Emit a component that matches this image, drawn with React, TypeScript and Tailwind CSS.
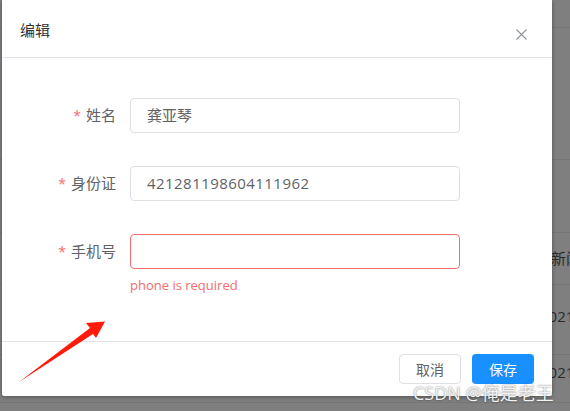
import React from "react";

const FONT = "font-['Open_Sans','Noto_Sans_CJK_SC',sans-serif]";

function Label({ text }: { text: string }) {
  return (
    <div className="w-[128px] pr-[14px] flex justify-end items-center text-[15px] text-[#606266]">
      <span className="text-[#f56c6c] mr-[5px] text-[14px] -mt-[1px]">*</span>
      <span>{text}</span>
    </div>
  );
}

export default function App() {
  return (
    <div className={`relative w-[570px] h-[411px] overflow-hidden bg-[#7f7f7f] ${FONT}`}>
      {/* background page (table under overlay) */}
      <div className="flex flex-col text-[15px] text-[#2b2b2b]">
        <div className="h-[28px] border-b border-[#767676]" />
        <div className="h-[132px] border-b border-[#767676]" />
        <div className="h-[73px] border-b border-[#767676]" />
        <div className="h-[52px] border-b border-[#767676] flex items-center pl-[551px] whitespace-nowrap">新闻</div>
        <div className="h-[70px] border-b border-[#767676] flex items-start pt-[21px] pl-[540px] leading-[20px] whitespace-nowrap">2021-01</div>
        <div className="h-[48px] border-b border-[#767676] flex items-start pt-[7px] pl-[540px] leading-[20px] whitespace-nowrap">2021-01</div>
      </div>

      {/* dialog */}
      <div className="absolute left-[2px] top-0 w-[550px] h-[396px] bg-white rounded-b-[2px] shadow-[0_1px_4px_rgba(0,0,0,0.35)] flex flex-col">
        <div className="h-[58px] border-b border-[#e4e2ea] flex justify-between items-start pl-[18px] pr-[25px] shrink-0">
          <span className="pt-[20px] text-[15px] leading-[20px] text-[#303133]">编辑</span>
          <svg className="mt-[29px]" width="11" height="11" viewBox="0 0 11 11">
            <path d="M0.5 0.5 L10.5 10.5 M10.5 0.5 L0.5 10.5" stroke="#909399" strokeWidth="1.1" fill="none" />
          </svg>
        </div>

        <div className="flex-1 pt-[40px] flex flex-col gap-[33px]">
          <div className="flex h-[35px]">
            <Label text="姓名" />
            <div className="w-[330px] h-[35px] border border-[#dcdfe6] rounded-[4px] flex items-center pl-[16px] text-[15px] text-[#606266]">
              龚亚琴
            </div>
          </div>
          <div className="flex h-[35px]">
            <Label text="身份证" />
            <div className="w-[330px] h-[35px] border border-[#dcdfe6] rounded-[4px] flex items-center pl-[16px] text-[15px] tracking-[0.45px] text-[#606266]">
              421281198604111962
            </div>
          </div>
          <div className="flex">
            <div className="h-[35px] flex">
              <Label text="手机号" />
            </div>
            <div className="flex flex-col">
              <div className="w-[330px] h-[35px] border border-[#f56c6c] rounded-[4px]" />
              <div className="mt-[8px] text-[13px] leading-[17px] text-[#f56c6c]">phone is required</div>
            </div>
          </div>
        </div>

        <div className="h-[55px] border-t border-[#e4e2ea] flex justify-end items-start pt-[12px] pr-[18px] gap-[11px] shrink-0">
          <div className="w-[62px] h-[30px] border border-[#dcdfe6] rounded-[4px] flex items-center justify-center text-[14px] text-[#606266]">
            取消
          </div>
          <div className="w-[62px] h-[30px] bg-[#1890ff] rounded-[4px] flex items-center justify-center text-[14px] text-white">
            保存
          </div>
        </div>
      </div>

      {/* annotation arrow */}
      <svg className="absolute left-0 top-0 pointer-events-none" width="570" height="411" viewBox="0 0 570 411">
        <polygon points="19,382 90,328 86,323 105,321.5 96,338 93,334" fill="#ff1a0a" />
      </svg>

      {/* watermark */}
      <div className="absolute left-[413px] top-[381px] text-[18px] leading-[24px] text-[#f2f2f2] whitespace-nowrap [text-shadow:0_0_2px_rgba(0,0,0,0.55)]">
        CSDN @俺是老王
      </div>
    </div>
  );
}
